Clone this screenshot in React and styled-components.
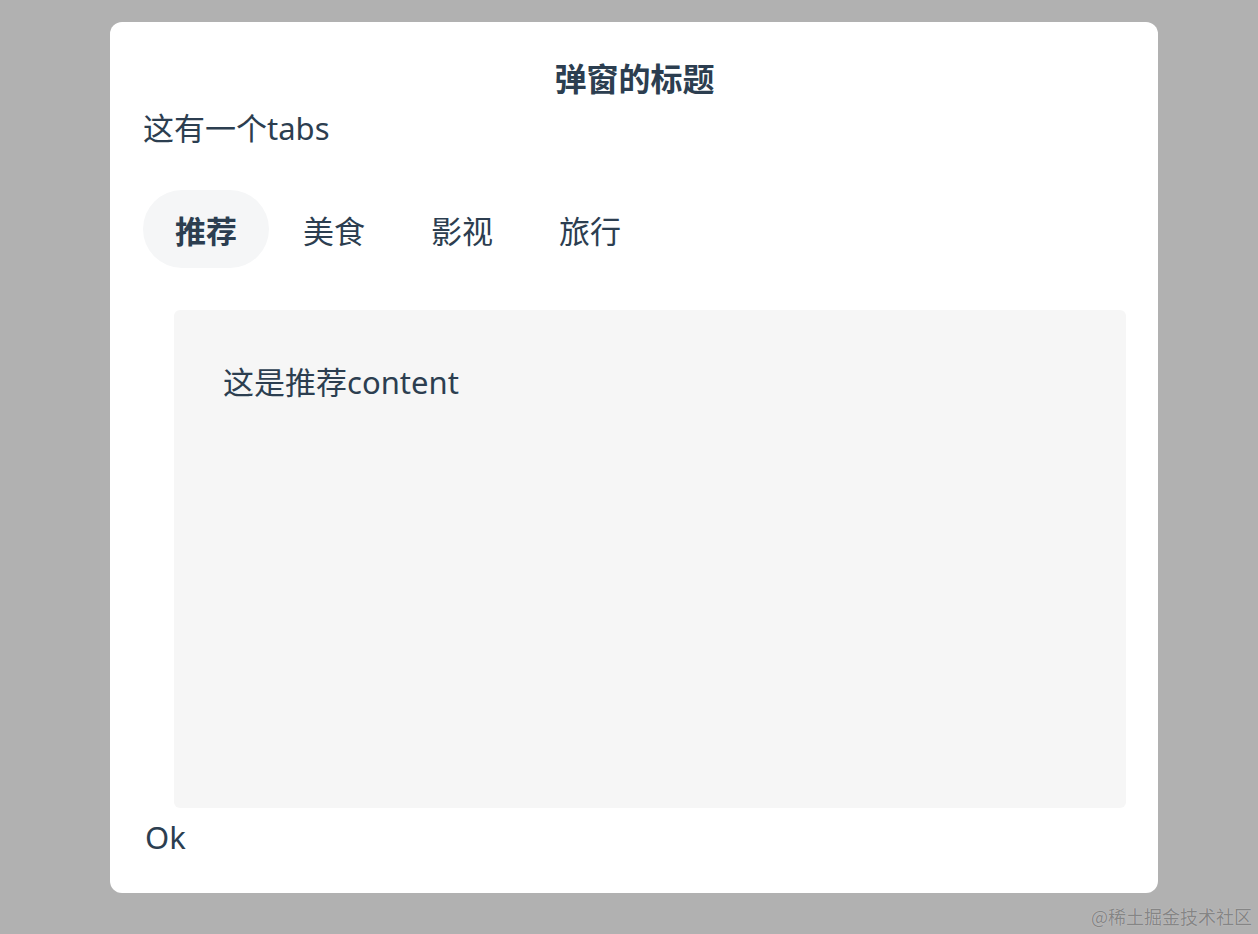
import React, { useState } from 'react';
import styled, { createGlobalStyle } from 'styled-components';

const GlobalStyle = createGlobalStyle`
  html, body {
    margin: 0;
    padding: 0;
    background: #b1b1b1;
  }
  body {
    font-family: "Noto Sans", "Noto Sans CJK SC", sans-serif;
    color: #2c3e50;
  }
`;

const Page = styled.div`
  position: relative;
  width: 1258px;
  height: 934px;
  padding: 22px 0 0 110px;
  box-sizing: border-box;
`;

const Dialog = styled.div`
  width: 1048px;
  height: 871px;
  box-sizing: border-box;
  padding: 30px 32px 0 33px;
  background: #fff;
  border-radius: 12px;
  display: flex;
  flex-direction: column;
`;

const Title = styled.h2`
  margin: 0 0 2px;
  font-size: 32px;
  line-height: 50px;
  font-weight: 700;
  text-align: center;
  font-family: "Noto Sans CJK SC", sans-serif;
`;

const Text = styled.p`
  margin: 0;
  font-size: 31px;
  line-height: 48px;
`;

const TabList = styled.div`
  display: flex;
  margin-top: 38px;
`;

const Tab = styled.button`
  height: 78px;
  padding: 0 32px;
  border: none;
  border-radius: 39px;
  background: ${p => (p.$active ? '#f5f6f7' : 'transparent')};
  color: #2c3e50;
  font-family: "Noto Sans CJK SC", sans-serif;
  font-size: 31px;
  font-weight: ${p => (p.$active ? 700 : 400)};
  cursor: pointer;
  margin-right: 2px;
`;

const Panel = styled.div`
  margin: 42px 0 0 31px;
  height: 498px;
  box-sizing: border-box;
  padding: 48px 49px;
  background: #f6f6f6;
  border-radius: 6px;
`;

const Footer = styled.div`
  margin-top: 5px;
  padding-left: 2px;
  font-size: 31px;
  line-height: 48px;
`;

const Watermark = styled.span`
  position: absolute;
  right: 6px;
  bottom: 5px;
  font-family: "Noto Sans CJK SC", sans-serif;
  font-size: 18px;
  color: #858585;
  text-shadow: 0 0 1px #d8d8d8;
`;

const tabs = ['推荐', '美食', '影视', '旅行'];

export default function App() {
  const [active, setActive] = useState(0);
  return (
    <Page>
      <GlobalStyle />
      <Dialog>
        <Title>弹窗的标题</Title>
        <Text>这有一个tabs</Text>
        <TabList>
          {tabs.map((t, i) => (
            <Tab key={t} $active={i === active} onClick={() => setActive(i)}>
              {t}
            </Tab>
          ))}
        </TabList>
        <Panel>
          <Text>这是{tabs[active]}content</Text>
        </Panel>
        <Footer>Ok</Footer>
      </Dialog>
      <Watermark>@稀土掘金技术社区</Watermark>
    </Page>
  );
}
